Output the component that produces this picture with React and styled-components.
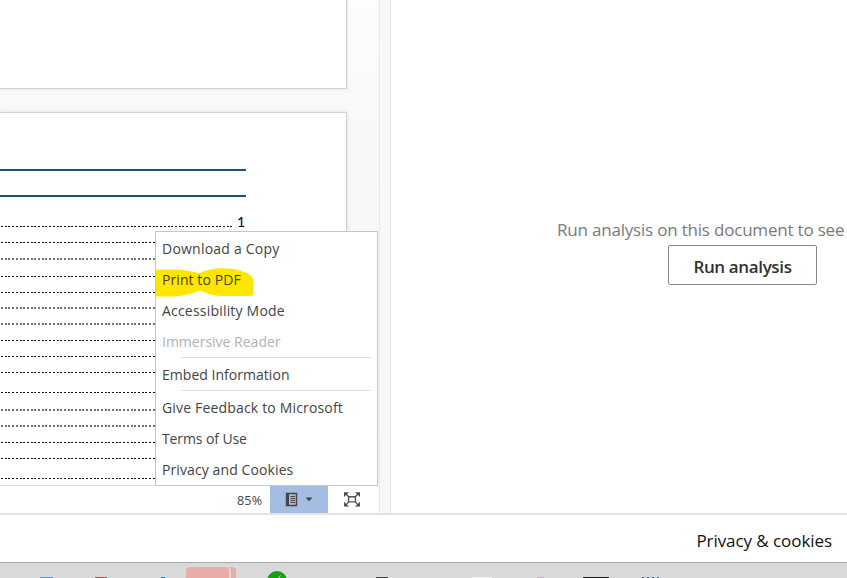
import React from "react";
import styled, { createGlobalStyle } from "styled-components";

const GlobalStyle = createGlobalStyle`
  * { box-sizing: border-box; }
  body { margin: 0; overflow: hidden; background: #fff; font-family: "Open Sans", "Noto Sans", sans-serif; }
`;

const Screen = styled.div`
  width: 847px;
  height: 578px;
  display: flex;
  flex-direction: column;
  overflow: hidden;
  background: #fff;
`;
const Workspace = styled.main`
  display: flex;
  height: 515px;
  border-bottom: 2px solid #e3e3e3;
`;
const Viewer = styled.section`
  position: relative;
  display: flex;
  flex-direction: column;
  width: 380px;
  border-right: 1px solid #e8e8e8;
`;
const Canvas = styled.div`
  display: flex;
  flex-direction: column;
  gap: 23px;
  height: 485px;
  overflow: hidden;
  background: linear-gradient(#fdfdfc, #f8f8f7 130px, #f5f5f4);
`;
const Page = styled.article`
  flex: none;
  width: 347px;
  height: ${(p) => p.$height}px;
  padding-top: ${(p) => p.$top || 0}px;
  background: #fff;
  border: solid #d2d2d6;
  border-width: ${(p) => (p.$first ? "0 1px 1px 0" : "1px 1px 0 0")};
  box-shadow: 0 0 3px 1px #e9e9ed;
`;
const Rule = styled.div`
  width: 246px;
  height: 2px;
  margin-bottom: ${(p) => p.$after}px;
  background: #1f4e80;
`;
const TocRow = styled.div`
  display: flex;
  align-items: flex-end;
  width: 250px;
  height: ${(p) => p.$height}px;
`;
const Leader = styled.div`
  width: 233px;
  height: ${(p) => (p.$soft ? 2 : 1)}px;
  margin-left: 1px;
  opacity: ${(p) => (p.$soft ? 0.6 : 1)};
  background: repeating-linear-gradient(90deg, #15101c 0 2px, transparent 2px 3.7px);
`;
const PageNumber = styled.span`
  margin-left: 3px;
  height: 15px;
  font: 14px/19px Lato, sans-serif;
  color: #000;
`;
const StatusBar = styled.div`
  display: flex;
  height: 28px;
  padding-left: 237px;
  border-top: 1px solid #dedede;
  background: #fff;
`;
const Zoom = styled.span`
  width: 33px;
  font-size: 12.5px;
  line-height: 29px;
  letter-spacing: 0.2px;
  color: #444;
`;
const ViewButton = styled.button`
  display: flex;
  align-items: center;
  gap: 7px;
  width: 58px;
  height: 27px;
  padding: 0 0 0 15px;
  border: 0;
  background: #a3bde3;
`;
const FitButton = styled.button`
  display: flex;
  padding: 6px 0 0 16px;
  border: 0;
  background: none;
`;
const Menu = styled.nav`
  position: absolute;
  left: 155px;
  top: 231px;
  width: 223px;
  height: 255px;
  padding-top: 1px;
  border: 1px solid #c6c6c6;
  background: #fff;
`;
const MenuItem = styled.div`
  position: relative;
  height: 31px;
  padding-left: 6px;
  font-size: 14px;
  line-height: 31px;
  letter-spacing: ${(p) => p.$track || 0}px;
  white-space: nowrap;
  color: ${(p) => (p.$disabled ? "#b1b1b1" : "#444")};
`;
const Marked = styled.span`
  position: relative;
  color: #4a4200;
`;
const Marker = styled.svg`
  position: absolute;
  left: 0;
  top: 3px;
`;
const Separator = styled.div`
  height: 1px;
  margin: 0 6px 1px 25px;
  background: #e1e1e1;
`;
const Gutter = styled.div`
  width: 11px;
  background: #f9f8f7;
  border-right: 1px solid #eae9e8;
`;
const Pane = styled.aside`
  flex: 1;
  display: flex;
  flex-direction: column;
  padding: 215px 0 0 166px;
  overflow: hidden;
`;
const Hint = styled.p`
  margin: 0;
  height: 30px;
  font-size: 17px;
  line-height: 30px;
  letter-spacing: ${(p) => p.$track}px;
  white-space: nowrap;
  color: #7a7a7a;
`;
const RunButton = styled.button`
  width: 149px;
  height: 40px;
  margin-left: 111px;
  padding: 2px 0 0;
  border: 1px solid #8a8886;
  border-radius: 2px;
  background: #fff;
  color: #323130;
  font: 600 17px "Open Sans", sans-serif;
  letter-spacing: ${(p) => p.$track}px;
`;
const Footer = styled.footer`
  display: flex;
  justify-content: flex-end;
  height: 47px;
  padding-right: 15px;
  font-size: 17px;
  line-height: 51px;
  letter-spacing: ${(p) => p.$track}px;
  color: #111;
`;
const Taskbar = styled.div`
  height: 16px;
  border-top: 1px solid #a9a9a9;
  background: #d9d9d9;
`;
const TaskIcons = styled.svg`
  display: block;
`;

/* Height of each contents row, and whether its dots straddle two pixel rows. */
const leaders = [
  [16], [17, true], [17], [16], [16, true], [16, true], [16], [16], [16],
  [20], [18, true], [16, true], [16], [16], [20],
];

const ReadingIcon = () => (
  <svg width="13" height="15" viewBox="0 0 13 15" fill="none" stroke="#444">
    <path d="M1.5 1.5h10v12h-10z" strokeWidth="1.4" />
    <path d="M1 1h3v13H1z" fill="#444" stroke="none" />
    <path d="M5.5 4.5H10M5.5 6.5H10M5.5 8.5H10M5.5 10.5H10" />
  </svg>
);
const FitIcon = () => (
  <svg width="16" height="15" viewBox="0 0 16 15" fill="none" stroke="#505050">
    <path d="M4.6 4.7h6.8v5.2H4.6z" strokeWidth="1.4" />
    <path d="M1 1l3.5 3.5M15 1l-3.5 3.5M1 14l3.5-3.8M15 14l-3.5-3.8" strokeWidth="1.2" />
    <path d="M0 .2h5L0 5zM16 .2h-5L16 5zM0 14.5h5L0 9.8zM16 14.5h-5l5-4.7z" fill="#505050" stroke="none" />
  </svg>
);

export default function App() {
  return (
    <Screen>
      <GlobalStyle />
      <Workspace>
        <Viewer>
          <Canvas>
            <Page $height={89} $first />
            <Page $height={373} $top={56}>
              <Rule $after={24} />
              <Rule $after={0} />
              <TocRow $height={30}>
                <Leader />
                <PageNumber>1</PageNumber>
              </TocRow>
              {leaders.map(([height, soft], i) => (
                <TocRow key={i} $height={height}><Leader $soft={soft} /></TocRow>
              ))}
            </Page>
          </Canvas>
          <StatusBar>
            <Zoom>85%</Zoom>
            <ViewButton aria-label="View options">
              <ReadingIcon />
              <svg width="8" height="5" viewBox="0 0 8 5"><path d="M.5.5h7L4 4.3z" fill="#444" /></svg>
            </ViewButton>
            <FitButton aria-label="Fit to window"><FitIcon /></FitButton>
          </StatusBar>
          <Menu>
            <MenuItem $track={0.22}>Download a Copy</MenuItem>
            <MenuItem $track={0.08}>
              <Marker width="98" height="31" viewBox="0 0 98 31">
                <path d="M0 2.5H14C26 2 35 4 43 6.2C51 3 57 1.2 67 1.2C79 1.2 88 4 94 8Q97 10 97.5 15V28Q96 29 92 29H65C56 28.5 50 26 45 23.5C37 26 29 28.5 19 29.5L0 29.5Z" fill="#ffe600" />
              </Marker>
              <Marked>Print to PDF</Marked>
            </MenuItem>
            <MenuItem $track={0.2}>Accessibility Mode</MenuItem>
            <MenuItem $disabled>Immersive Reader</MenuItem>
            <Separator />
            <MenuItem $track={0.03}>Embed Information</MenuItem>
            <Separator />
            <MenuItem $track={0.17}>Give Feedback to Microsoft</MenuItem>
            <MenuItem $track={-0.1}>Terms of Use</MenuItem>
            <MenuItem $track={0.1}>Privacy and Cookies</MenuItem>
          </Menu>
        </Viewer>
        <Gutter />
        <Pane>
          <Hint $track={-0.2}>Run analysis on this document to see</Hint>
          <RunButton $track={-0.37}>Run analysis</RunButton>
        </Pane>
      </Workspace>
      <Footer $track={-0.07}>Privacy &amp; cookies</Footer>
      <Taskbar>
        <TaskIcons width="847" height="15" viewBox="0 0 847 15">
          <path d="M186 15V8q0-4 4-4h35q4 0 4 4v7z" fill="#e9aca8" />
          <path d="M228 4h4q4 0 4 4v7h-5V9q0-4-3-5z" fill="#e9aca8" />
          <circle cx="277" cy="18" r="10" fill="#149e10" />
          <path d="M278.500 15l2-2.500" stroke="#bde6bb" />
          <path d="M40 14.500h13" stroke="#27b5cc" />
          <path d="M95 14.500h12" stroke="#d8403a" />
          <path d="M161 14.500h4" stroke="#2088c8" />
          <path d="M376 14.500h12" stroke="#444" />
          <path d="M472 14.500h20" stroke="#f2f4f6" />
          <path d="M537 14.500h7" stroke="#c4b0cf" />
          <path d="M583 14.500h26" stroke="#202020" />
          <path d="M642 14.500h18" stroke="#28758a" strokeDasharray="2 3" />
        </TaskIcons>
      </Taskbar>
    </Screen>
  );
}
